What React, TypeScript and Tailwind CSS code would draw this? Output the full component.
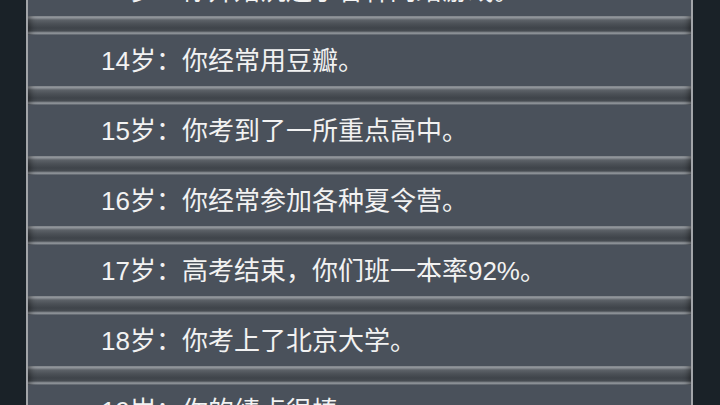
import React from "react";

const rows = [
  "13岁：你开始沉迷于各种网络游戏。",
  "14岁：你经常用豆瓣。",
  "15岁：你考到了一所重点高中。",
  "16岁：你经常参加各种夏令营。",
  "17岁：高考结束，你们班一本率92%。",
  "18岁：你考上了北京大学。",
  "19岁：你的绩点很棒。",
];

function Separator() {
  return (
    <div className="h-[19px] bg-[linear-gradient(to_bottom,#7d8187_0px,#959a9f_1px,#8a8e94_2px,#5d6268_4px,#4b5056_8px,#3f444a_12px,#474c52_15px,#6f747a_16px,#90959a_17px,#858a90_18px,#4a515b_19px)] shadow-[inset_8px_0_6px_-6px_rgba(0,0,0,0.45),inset_-8px_0_6px_-6px_rgba(0,0,0,0.45)]" />
  );
}

export default function App() {
  return (
    <div className="w-[720px] h-[405px] overflow-hidden bg-[#1a2228] flex">
      <div className="ml-[26px] w-[667px] h-full border-x-2 border-[#a2a5a9] bg-[#4a515b] overflow-hidden">
        <div className="-mt-[35px] flex flex-col">
          {rows.map((text, i) => (
            <React.Fragment key={i}>
              {i > 0 && <Separator />}
              <div className="h-[51px] shrink-0 flex items-center pl-[73px] text-[26px] leading-none text-[#f2f2f2] font-['Liberation_Sans','Noto_Sans_CJK_SC',sans-serif] whitespace-nowrap">
                {text}
              </div>
            </React.Fragment>
          ))}
        </div>
      </div>
    </div>
  );
}
